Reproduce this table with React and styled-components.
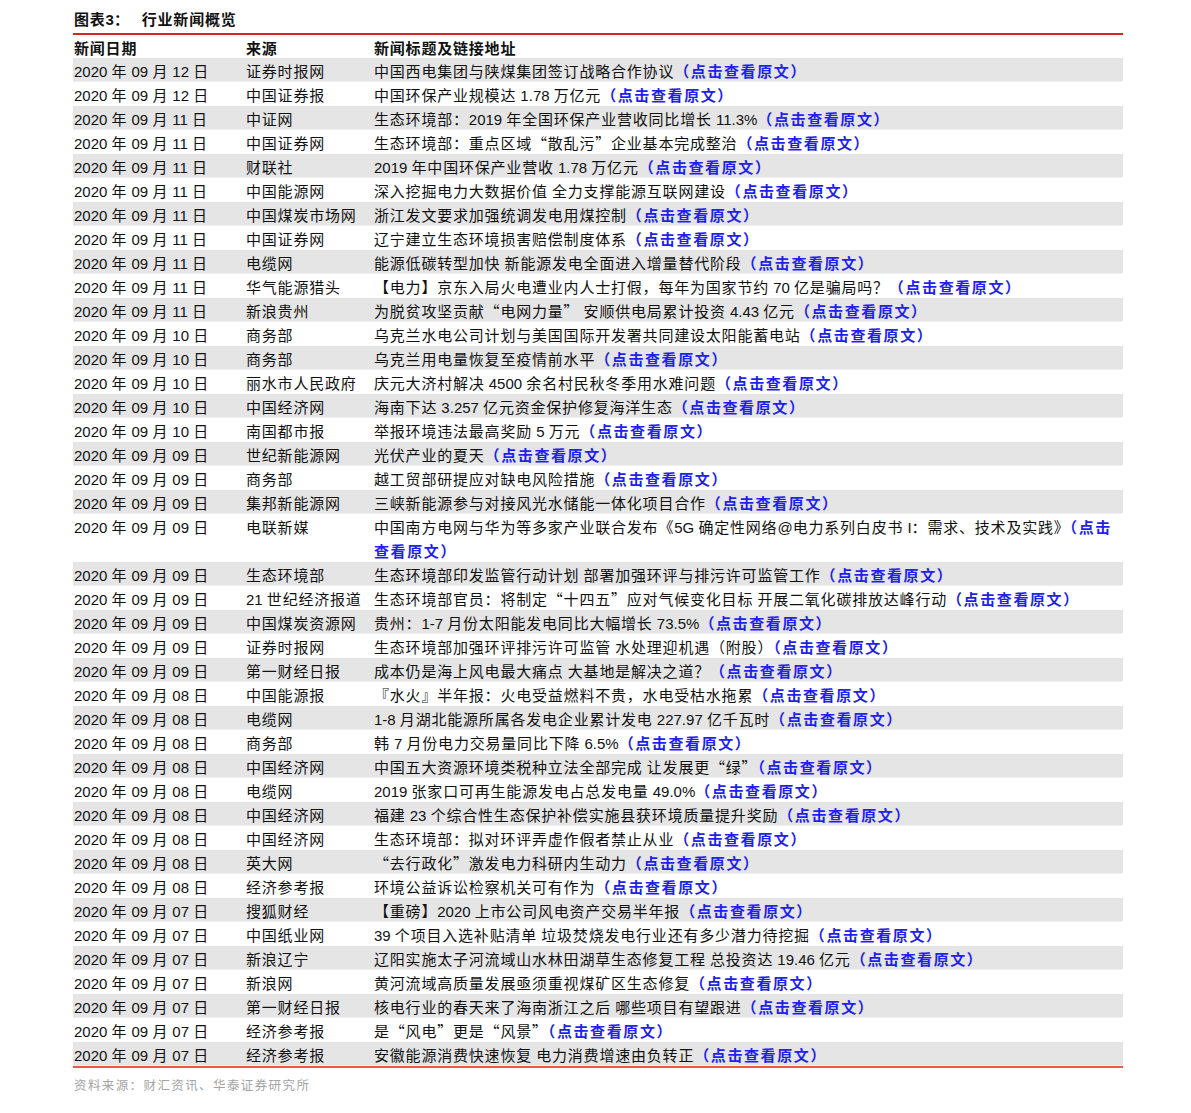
import styled, { createGlobalStyle } from 'styled-components'

const GlobalStyle = createGlobalStyle`
    body {
        margin: 0;
        background: #fff;
        font-family: "Noto Sans CJK SC", "Liberation Sans", sans-serif;
        color: #111;
    }
`

const Page = styled.div`
    width: 1050px;
    padding-left: 73px;
`

const Caption = styled.div`
    padding: 10px 0 5px 1px;
    height: 18px;
    line-height: 18px;
    font-size: 15px;
    font-weight: bold;
    letter-spacing: 0.8px;
    border-bottom: 2px solid #cf2a1c;
`

const CaptionGap = styled.span`
    margin-left: 12px;
`

const Table = styled.div`
    display: flex;
    flex-direction: column;
    border-bottom: 2px solid #ec5a4c;
`

const Row = styled.div`
    display: grid;
    grid-template-columns: 172px 128px 1fr;
    min-height: ${p => (p.$head ? 23 : 24)}px;
    background: ${p => (p.$shade ? '#e5e5e5' : '#fff')};
    box-shadow: ${p => (p.$shade ? 'inset 0 -1px 0 #efefef' : 'none')};
    font-size: 15px;
    line-height: ${p => (p.$head ? 23 : 24)}px;
    letter-spacing: 0.8px;
    font-weight: ${p => (p.$head ? 'bold' : 'normal')};
`

const Cell = styled.div`
    padding: 1px 2px 0 1px;
    margin-bottom: -1px;
`

const Latin = styled.span`
    font-family: "Liberation Sans", "Noto Sans CJK SC", sans-serif;
    letter-spacing: 0;
    line-height: 1;
`

const Link = styled.span`
    color: #1f1ff0;
    font-weight: bold;
    letter-spacing: 1.6px;
`

const Source = styled.div`
    padding: 9px 0 0 1px;
    line-height: 16px;
    font-size: 12.5px;
    letter-spacing: 1.4px;
    color: #a3a3a3;
`

const txt = s =>
    s.split(/([\x20-\x7e]+)/).filter(Boolean).map((part, i) =>
        /^[\x20-\x7e]+$/.test(part) ? <Latin key={i}>{part}</Latin> : part
    )

const news = [
    ['12', '证券时报网', '中国西电集团与陕煤集团签订战略合作协议'],
    ['12', '中国证券报', '中国环保产业规模达 1.78 万亿元'],
    ['11', '中证网', '生态环境部：2019 年全国环保产业营收同比增长 11.3%'],
    ['11', '中国证券网', '生态环境部：重点区域“散乱污”企业基本完成整治'],
    ['11', '财联社', '2019 年中国环保产业营收 1.78 万亿元'],
    ['11', '中国能源网', '深入挖掘电力大数据价值 全力支撑能源互联网建设'],
    ['11', '中国煤炭市场网', '浙江发文要求加强统调发电用煤控制'],
    ['11', '中国证券网', '辽宁建立生态环境损害赔偿制度体系'],
    ['11', '电缆网', '能源低碳转型加快 新能源发电全面进入增量替代阶段'],
    ['11', '华气能源猎头', '【电力】京东入局火电遭业内人士打假，每年为国家节约 70 亿是骗局吗？'],
    ['11', '新浪贵州', '为脱贫攻坚贡献“电网力量” 安顺供电局累计投资 4.43 亿元'],
    ['10', '商务部', '乌克兰水电公司计划与美国国际开发署共同建设太阳能蓄电站'],
    ['10', '商务部', '乌克兰用电量恢复至疫情前水平'],
    ['10', '丽水市人民政府', '庆元大济村解决 4500 余名村民秋冬季用水难问题'],
    ['10', '中国经济网', '海南下达 3.257 亿元资金保护修复海洋生态'],
    ['10', '南国都市报', '举报环境违法最高奖励 5 万元'],
    ['09', '世纪新能源网', '光伏产业的夏天'],
    ['09', '商务部', '越工贸部研提应对缺电风险措施'],
    ['09', '集邦新能源网', '三峡新能源参与对接风光水储能一体化项目合作'],
    ['09', '电联新媒', '中国南方电网与华为等多家产业联合发布《5G 确定性网络@电力系列白皮书 I：需求、技术及实践》'],
    ['09', '生态环境部', '生态环境部印发监管行动计划 部署加强环评与排污许可监管工作'],
    ['09', '21 世纪经济报道', '生态环境部官员：将制定“十四五”应对气候变化目标 开展二氧化碳排放达峰行动'],
    ['09', '中国煤炭资源网', '贵州：1-7 月份太阳能发电同比大幅增长 73.5%'],
    ['09', '证券时报网', '生态环境部加强环评排污许可监管 水处理迎机遇（附股）'],
    ['09', '第一财经日报', '成本仍是海上风电最大痛点 大基地是解决之道？'],
    ['08', '中国能源报', '『水火』半年报：火电受益燃料不贵，水电受枯水拖累'],
    ['08', '电缆网', '1-8 月湖北能源所属各发电企业累计发电 227.97 亿千瓦时'],
    ['08', '商务部', '韩 7 月份电力交易量同比下降 6.5%'],
    ['08', '中国经济网', '中国五大资源环境类税种立法全部完成 让发展更“绿”'],
    ['08', '电缆网', '2019 张家口可再生能源发电占总发电量 49.0%'],
    ['08', '中国经济网', '福建 23 个综合性生态保护补偿实施县获环境质量提升奖励'],
    ['08', '中国经济网', '生态环境部：拟对环评弄虚作假者禁止从业'],
    ['08', '英大网', '“去行政化”激发电力科研内生动力'],
    ['08', '经济参考报', '环境公益诉讼检察机关可有作为'],
    ['07', '搜狐财经', '【重磅】2020 上市公司风电资产交易半年报'],
    ['07', '中国纸业网', '39 个项目入选补贴清单 垃圾焚烧发电行业还有多少潜力待挖掘'],
    ['07', '新浪辽宁', '辽阳实施太子河流域山水林田湖草生态修复工程 总投资达 19.46 亿元'],
    ['07', '新浪网', '黄河流域高质量发展亟须重视煤矿区生态修复'],
    ['07', '第一财经日报', '核电行业的春天来了海南浙江之后 哪些项目有望跟进'],
    ['07', '经济参考报', '是“风电”更是“风景”'],
    ['07', '经济参考报', '安徽能源消费快速恢复 电力消费增速由负转正'],
]

export default function App() {
    return (
        <Page>
            <GlobalStyle />
            <Caption>
                {txt('图表3：')}<CaptionGap>行业新闻概览</CaptionGap>
            </Caption>
            <Table>
                <Row $head>
                    <Cell>新闻日期</Cell>
                    <Cell>来源</Cell>
                    <Cell>新闻标题及链接地址</Cell>
                </Row>
                {news.map(([day, source, title], i) => (
                    <Row key={i} $shade={i % 2 === 0}>
                        <Cell>{txt(`2020 年 09 月 ${day} 日`)}</Cell>
                        <Cell>{txt(source)}</Cell>
                        <Cell>
                            {txt(title)}
                            <Link>（点击查看原文）</Link>
                        </Cell>
                    </Row>
                ))}
            </Table>
            <Source>资料来源：财汇资讯、华泰证券研究所</Source>
        </Page>
    )
}
